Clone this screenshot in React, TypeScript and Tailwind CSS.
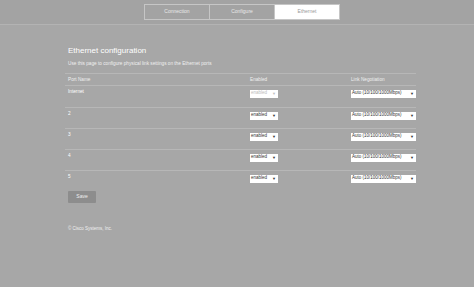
import React from "react";

const ports = ["Internet", "2", "3", "4", "5"];

function Sel({ text, w, disabled }: { text: string; w: string; disabled?: boolean }) {
  return (
    <div
      className={`${w} h-[8px] flex items-center justify-between bg-white px-[1px] ${
        disabled ? "text-[#bdbdbd] bg-[#f2f2f2]" : "text-[#333]"
      } text-[4.5px] leading-none`}
    >
      <span>{text}</span>
      <span className="text-[4px] mr-[1px]">▼</span>
    </div>
  );
}

export default function App() {
  return (
    <div
      className="w-[474px] h-[287px] bg-[#a7a7a7] text-white overflow-hidden"
      style={{ fontFamily: '"Liberation Sans", Arial, sans-serif' }}
    >
      <div className="h-[25px] bg-[#a3a3a3] border-b border-[#b3b3b3] flex justify-center pt-[4px]">
        <div className="flex h-[16px] border border-[#c6c6c6] ml-[10px]">
          <div className="w-[65px] flex items-center justify-center text-[5px] text-[#e8e8e8] border-r border-[#c6c6c6]">
            Connection
          </div>
          <div className="w-[65px] flex items-center justify-center text-[5px] text-[#e8e8e8] border-r border-[#c6c6c6]">
            Configure
          </div>
          <div className="w-[64px] flex items-center justify-center text-[5px] text-[#9a9a9a] bg-white">
            Ethernet
          </div>
        </div>
      </div>

      <div className="ml-[68px] w-[348px] pt-[22px]">
        <div className="text-[8px] leading-none text-white">Ethernet configuration</div>
        <div className="text-[4.7px] leading-none mt-[7px] text-[#f0f0f0]">
          Use this page to configure physical link settings on the Ethernet ports
        </div>
        <div className="mt-[6px] border-t border-[#b7b7b7] h-[12px] flex items-center text-[4.7px] text-[#f0f0f0] ml-[-3px] pl-[3px]">
          <div className="w-[182px]">Port Name</div>
          <div className="w-[101px]">Enabled</div>
          <div>Link Negotiation</div>
        </div>
        {ports.map((p, i) => (
          <div
            key={p}
            className={`border-t border-[#b7b7b7] ${i === 0 ? "h-[22px]" : "h-[21px]"} flex text-[4.7px] ml-[-3px] pl-[3px]`}
          >
            <div className="w-[182px] pt-[2px]">{p}</div>
            <div className="w-[101px] pt-[4px]">
              <Sel text="enabled" w="w-[28px]" disabled={i === 0} />
            </div>
            <div className="pt-[4px]">
              <Sel text="Auto (10/100/1000Mbps)" w="w-[65px]" />
            </div>
          </div>
        ))}
        <div className="mt-[0px] w-[28px] h-[12px] bg-[#8d8d8d] flex items-center justify-center text-[5px] text-[#f0f0f0] rounded-[1px]">
          Save
        </div>
        <div className="mt-[23px] text-[4.5px] text-[#f0f0f0]">© Cisco Systems, Inc.</div>
      </div>
    </div>
  );
}
